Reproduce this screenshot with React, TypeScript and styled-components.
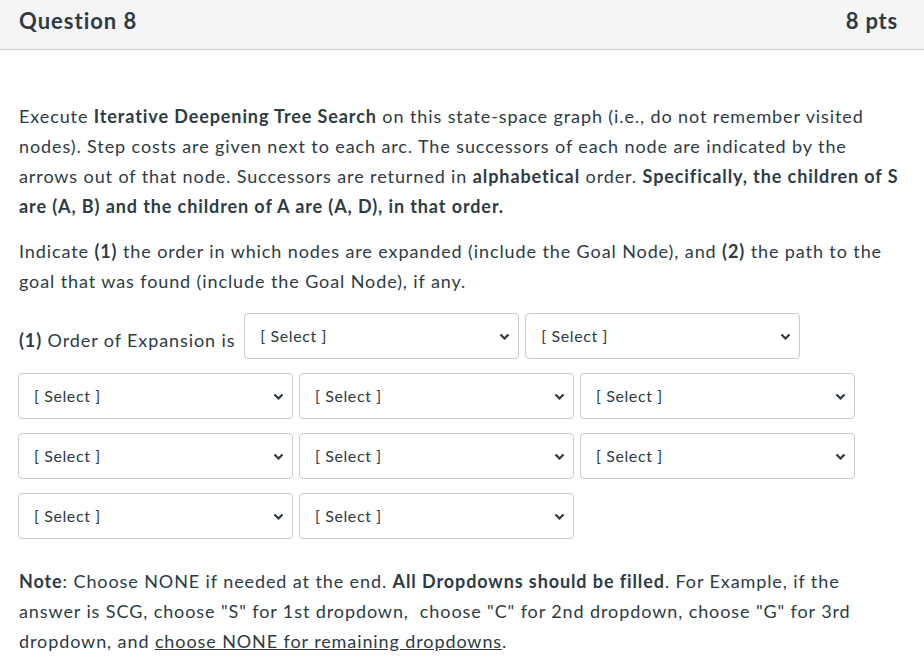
import styled, { createGlobalStyle } from "styled-components";

const Global = createGlobalStyle`
  body {
    margin: 0;
    background: #fff;
    font-family: Lato, "Open Sans", sans-serif;
    color: #2d3b45;
  }
`;

function Chevron() {
  return (
    <svg width="11" height="7" viewBox="0 0 11 7">
      <polyline points="1.5,1.5 5.5,5.5 9.5,1.5" fill="none" stroke="#2d3b45" strokeWidth="2.2" />
    </svg>
  );
}

function Dropdown() {
  return (
    <SelectBox>
      <SelectText>[ Select ]</SelectText>
      <Chevron />
    </SelectBox>
  );
}

function App() {
  return (
    <>
      <Global />
      <Header>
        <Title>Question 8</Title>
        <Points>8 pts</Points>
      </Header>
      <Body>
        <Para>
          Execute <b>Iterative Deepening Tree Search</b> on this state-space graph (i.e., do not remember visited
          nodes). Step costs are given next to each arc. The successors of each node are indicated by the
          arrows out of that node. Successors are returned in <b>alphabetical</b> order.{" "}
          <b>Specifically, the children of S are (A, B) and the children of A are (A, D), in that order.</b>
        </Para>
        <Para>
          Indicate <b>(1)</b> the order in which nodes are expanded (include the Goal Node), and <b>(2)</b> the path to the
          goal that was found (include the Goal Node), if any.
        </Para>
        <Answers>
          <Label>
            <b>(1)</b> Order of Expansion is
          </Label>
          {Array.from({ length: 10 }).map((_, i) => (
            <Dropdown key={i} />
          ))}
        </Answers>
        <Para>
          <b>Note</b>: Choose NONE if needed at the end. <b>All Dropdowns should be filled</b>. For Example, if the
          answer is SCG, choose "S" for 1st dropdown,&nbsp; choose "C" for 2nd dropdown, choose "G" for 3rd
          dropdown, and <u>choose NONE for remaining dropdowns</u>.
        </Para>
      </Body>
    </>
  );
}

const Header = styled.div`
  display: flex;
  justify-content: space-between;
  align-items: center;
  height: 50px;
  padding: 0 26px 8px 19px;
  box-sizing: border-box;
  background: #f5f5f5;
  border-bottom: 1px solid #c7cdd1;
`;

const Title = styled.h2`
  margin: 0;
  font-size: 22px;
  font-weight: 700;
  letter-spacing: 1px;
`;

const Points = styled.span`
  font-size: 22px;
  font-weight: 700;
  letter-spacing: 0.8px;
`;

const Body = styled.div`
  padding: 51px 18px 0 19px;
`;

const Para = styled.p`
  margin: 0 0 15px;
  font-size: 18px;
  line-height: 30px;
  letter-spacing: 0.9px;
`;

const Answers = styled.div`
  display: flex;
  flex-wrap: wrap;
  align-items: center;
  gap: 14px 6px;
  margin: 17px 0 27px -1px;
`;

const Label = styled.span`
  font-size: 18px;
  line-height: 30px;
  letter-spacing: 0.9px;
  padding: 8px 3px 0 1px;
`;

const SelectBox = styled.div`
  width: 275px;
  height: 46px;
  box-sizing: border-box;
  display: flex;
  align-items: center;
  justify-content: space-between;
  padding: 0 8px 0 15px;
  border: 1px solid #c7cdd1;
  border-radius: 4px;
  background: #fff;
`;

const SelectText = styled.span`
  font-size: 16px;
  letter-spacing: 0.6px;
  margin-top: -2px;
`;

export default App;
